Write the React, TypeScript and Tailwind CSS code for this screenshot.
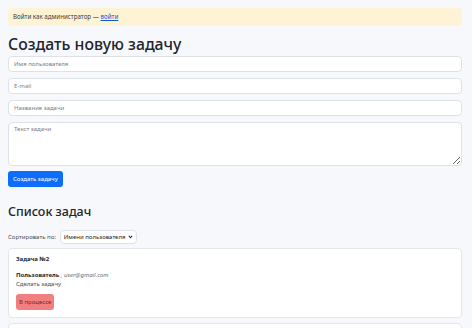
export default function App() {
  return (
    <div className="h-[328px] w-full overflow-hidden bg-white" style={{ fontFamily: '"Noto Sans", "Open Sans", sans-serif' }}>
      <div className="h-[328px] w-[472px] bg-[#f7f8fc] px-2 pt-2 text-[#212529]">
        {/* Admin alert */}
        <div className="flex h-[18px] w-[454px] items-center rounded-sm bg-[#fff3d6] px-[5px] text-[6.2px] text-[#3d3a33]">
          Войти как администратор —&nbsp;
          <a href="#" className="text-[#0a58ca] underline">войти</a>
        </div>

        <h1 className="mt-[6px] text-[15.8px] leading-[24px] font-medium">Создать новую задачу</h1>

        {/* Form */}
        <div className="flex w-[454px] flex-col gap-[6px]">
          <input
            className="h-[16px] rounded-sm border border-[#dee2e6] bg-white px-[5px] text-[6px] placeholder:text-[#7a7f85]"
            placeholder="Имя пользователя"
          />
          <input
            className="h-[16px] rounded-sm border border-[#dee2e6] bg-white px-[5px] text-[6px] placeholder:text-[#7a7f85]"
            placeholder="E-mail"
          />
          <input
            className="h-[16px] rounded-sm border border-[#dee2e6] bg-white px-[5px] text-[6px] placeholder:text-[#7a7f85]"
            placeholder="Название задачи"
          />
          <textarea
            className="h-[44px] rounded-sm border border-[#dee2e6] bg-white px-[5px] py-[2px] text-[6px] placeholder:text-[#7a7f85]"
            placeholder="Текст задачи"
          />
        </div>

        <button className="mt-[5px] block h-[16px] rounded-[3px] bg-[#0d6efd] px-[5px] text-[6px] text-white">
          Создать задачу
        </button>

        <h2 className="mt-[16px] text-[12.5px] leading-[18px] font-medium">Список задач</h2>

        {/* Sort */}
        <div className="mt-[9px] flex items-center gap-[4px] text-[6px]">
          <span className="text-[#495057]">Сортировать по:</span>
          <div className="flex h-[14px] items-center gap-[3px] rounded-sm border border-[#dee2e6] bg-white px-[3px]">
            <span>Имени пользователя</span>
            <svg width="5" height="4" viewBox="0 0 6 5">
              <path d="M1 1.2 L3 3.5 L5 1.2" fill="none" stroke="#212529" strokeWidth="1.3" />
            </svg>
          </div>
        </div>

        {/* Task cards */}
        <div className="mt-[4px] h-[70px] w-[454px] rounded-sm border border-[#e3e6ea] bg-white px-[7px] pt-[6px] text-[6px]">
          <div className="font-bold">Задача №2</div>
          <div className="mt-[7px]">
            <span className="font-bold">Пользователь</span>
            <span className="text-[#6c757d] italic"> , user@gmail.com</span>
          </div>
          <div className="text-[#495057]">Сделать задачу</div>
          <span className="mt-[5px] inline-flex h-[16px] items-center rounded-[3px] bg-[#f08080] px-[3px] text-[#842029]">
            В процессе
          </span>
        </div>
        <div className="mt-[5px] h-[70px] w-[454px] rounded-sm border border-[#e3e6ea] bg-white" />
      </div>
    </div>
  )
}
